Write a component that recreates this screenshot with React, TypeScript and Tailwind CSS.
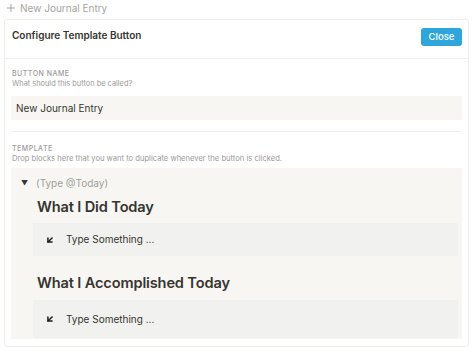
import { ArrowDownLeft } from 'lucide-react';

const blocks = ['What I Did Today', 'What I Accomplished Today'];

export default function App() {
  return (
    <div className="w-[474px] h-[352px] bg-white overflow-hidden text-[#37352f] font-['Inter','Liberation_Sans',sans-serif]">
      <div className="h-[19px] pl-[7px] pb-[3px] flex items-center gap-[5px] text-[10px] leading-none text-[#a5a4a1]">
        <svg width="8" height="8" viewBox="0 0 8 8" className="shrink-0">
          <path d="M4 0v8M0 4h8" stroke="#a5a4a1" strokeWidth="1" />
        </svg>
        <span>New Journal Entry</span>
      </div>

      <div className="ml-[4px] w-[465px] h-[328px] border border-[#ededeb] rounded-[3px] flex flex-col">
        <div className="flex items-start justify-between pl-[7px] pr-[6px] pt-[8px] h-[39px] border-b border-[#efefed]">
          <div className="text-[10px] leading-[14px] font-semibold">Configure Template Button</div>
          <button className="w-[41px] h-[18px] rounded-[3px] bg-[#2fa6db] text-white text-[9.5px] font-medium leading-none">
            Close
          </button>
        </div>

        <div className="px-[6px] pt-[10px]">
          <div className="pl-[1px] text-[7px] leading-[10px] tracking-[0.07em] uppercase text-[#9b9a97] font-medium">
            Button Name
          </div>
          <div className="pl-[1px] text-[7.4px] leading-[10px] text-[#9b9a97]">What should this button be called?</div>
          <div className="mt-[7px] h-[24px] bg-[#f7f6f3] flex items-center pl-[5px] text-[10px]">New Journal Entry</div>
          <div className="mt-[11px] border-b border-[#efefed]" />

          <div className="pt-[12px] pl-[1px] text-[7px] leading-[10px] tracking-[0.07em] uppercase text-[#9b9a97] font-medium">
            Template
          </div>
          <div className="pl-[1px] text-[7.6px] leading-[10px] text-[#9b9a97]">
            Drop blocks here that you want to duplicate whenever the button is clicked.
          </div>

          <div className="mt-[4px] h-[171px] bg-[#f7f6f3] pl-[10px] pr-[4px] pt-[8px] overflow-hidden">
            <div className="flex items-center h-[14px]">
              <span className="text-[7px] leading-none w-[15px]">▼</span>
              <span className="text-[10px] leading-none text-[#a09f9b]">(Type @Today)</span>
            </div>
            {blocks.map((title, i) => (
              <div key={title} className="pl-[12px]">
                <div
                  className={`${i === 0 ? 'mt-[2px] h-[31px]' : 'mt-[11px] h-[33px]'} pl-[4px] flex items-center text-[14.6px] font-semibold tracking-[-0.01em]`}
                >
                  {title}
                </div>
                <div
                  className={`${i === 0 ? 'h-[33px]' : 'h-[38px]'} bg-[#f1f1ef] flex items-center pl-[12px] gap-[11px] text-[10px]`}
                >
                  <ArrowDownLeft size={10} strokeWidth={3.6} className="text-[#1f1f1f]" />
                  <span>Type Something ...</span>
                </div>
              </div>
            ))}
          </div>
        </div>
      </div>
    </div>
  );
}
